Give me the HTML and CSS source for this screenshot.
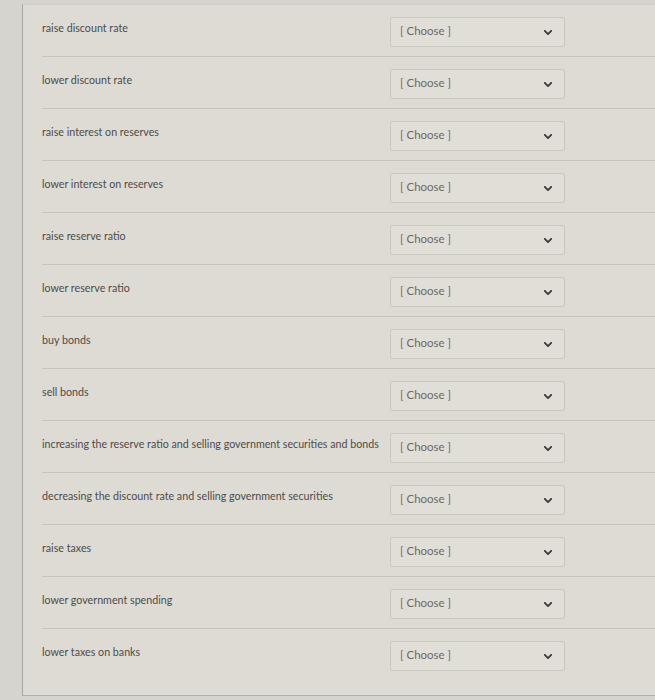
FILE: index.html
```html
<!DOCTYPE html>
<html>
<head>
<meta charset="utf-8">
<link rel="stylesheet" href="styles.css">
</head>
<body>
<div class="page">
  <div class="panel">
    <div class="row"><div class="label">raise discount rate</div><div class="select"><span class="choose">[ Choose ]</span><svg class="chev" viewBox="0 0 10 6"><path d="M1 1 L5 5 L9 1"/></svg></div></div>
    <div class="row"><div class="label">lower discount rate</div><div class="select"><span class="choose">[ Choose ]</span><svg class="chev" viewBox="0 0 10 6"><path d="M1 1 L5 5 L9 1"/></svg></div></div>
    <div class="row"><div class="label">raise interest on reserves</div><div class="select"><span class="choose">[ Choose ]</span><svg class="chev" viewBox="0 0 10 6"><path d="M1 1 L5 5 L9 1"/></svg></div></div>
    <div class="row"><div class="label">lower interest on reserves</div><div class="select"><span class="choose">[ Choose ]</span><svg class="chev" viewBox="0 0 10 6"><path d="M1 1 L5 5 L9 1"/></svg></div></div>
    <div class="row"><div class="label">raise reserve ratio</div><div class="select"><span class="choose">[ Choose ]</span><svg class="chev" viewBox="0 0 10 6"><path d="M1 1 L5 5 L9 1"/></svg></div></div>
    <div class="row"><div class="label">lower reserve ratio</div><div class="select"><span class="choose">[ Choose ]</span><svg class="chev" viewBox="0 0 10 6"><path d="M1 1 L5 5 L9 1"/></svg></div></div>
    <div class="row"><div class="label">buy bonds</div><div class="select"><span class="choose">[ Choose ]</span><svg class="chev" viewBox="0 0 10 6"><path d="M1 1 L5 5 L9 1"/></svg></div></div>
    <div class="row"><div class="label">sell bonds</div><div class="select"><span class="choose">[ Choose ]</span><svg class="chev" viewBox="0 0 10 6"><path d="M1 1 L5 5 L9 1"/></svg></div></div>
    <div class="row"><div class="label">increasing the reserve ratio and selling government securities and bonds</div><div class="select"><span class="choose">[ Choose ]</span><svg class="chev" viewBox="0 0 10 6"><path d="M1 1 L5 5 L9 1"/></svg></div></div>
    <div class="row"><div class="label">decreasing the discount rate and selling government securities</div><div class="select"><span class="choose">[ Choose ]</span><svg class="chev" viewBox="0 0 10 6"><path d="M1 1 L5 5 L9 1"/></svg></div></div>
    <div class="row"><div class="label">raise taxes</div><div class="select"><span class="choose">[ Choose ]</span><svg class="chev" viewBox="0 0 10 6"><path d="M1 1 L5 5 L9 1"/></svg></div></div>
    <div class="row"><div class="label">lower government spending</div><div class="select"><span class="choose">[ Choose ]</span><svg class="chev" viewBox="0 0 10 6"><path d="M1 1 L5 5 L9 1"/></svg></div></div>
    <div class="row last"><div class="label">lower taxes on banks</div><div class="select"><span class="choose">[ Choose ]</span><svg class="chev" viewBox="0 0 10 6"><path d="M1 1 L5 5 L9 1"/></svg></div></div>
  </div>
</div>
</body>
</html>
```

FILE: styles.css
```css
html, body {
  margin: 0;
  padding: 0;
  background: #d6d4cf;
}
body {
  width: 655px;
  height: 700px;
  overflow: hidden;
  font-family: Lato, "Open Sans", sans-serif;
}
.page {
  padding: 4px 0 0 22px;
}
.panel {
  background: #dedbd5;
  border-left: 1px solid #a8a6a1;
  border-bottom: 1px solid #b3b0ab;
  border-top: 1px solid #cfccc6;
  padding-left: 19px;
  padding-bottom: 14px;
}
.row {
  display: grid;
  grid-template-columns: 348px 175px;
  align-items: start;
  height: 52px;
  box-sizing: border-box;
  border-bottom: 1px solid #c7c4be;
}
.row.last {
  border-bottom: none;
}
.label {
  padding-top: 16px;
  font-size: 10.7px;
  line-height: 13px;
  color: #4d4c49;
  white-space: nowrap;
}
.select {
  margin-top: 12px;
  height: 30px;
  box-sizing: border-box;
  border: 1px solid #c9c6c0;
  border-radius: 2px;
  background: #e1ded8;
  display: flex;
  align-items: center;
  justify-content: space-between;
  padding: 0 12px 0 9px;
}
.choose {
  font-size: 11.5px;
  color: #6a6966;
  margin-top: -3px;
}
.chev {
  width: 8px;
  height: 5px;
  fill: none;
  stroke: #3e3d3b;
  stroke-width: 2.4;
  stroke-linecap: round;
  stroke-linejoin: round;
}
```
